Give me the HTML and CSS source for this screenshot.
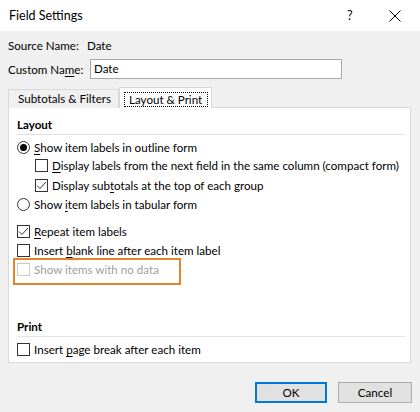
FILE: index.html
```html
<!DOCTYPE html>
<html>
<head>
<meta charset="utf-8">
<link rel="stylesheet" href="styles.css">
</head>
<body>
<div class="dialog">
  <div class="titlebar">
    <span class="title">Field Settings</span>
    <span class="help">?</span>
    <span class="close">
      <svg width="12" height="12" viewBox="0 0 12 12"><path d="M0.5 0.5 L11.5 11.5 M11.5 0.5 L0.5 11.5" stroke="#000" stroke-width="1" fill="none"/></svg>
    </span>
  </div>
  <div class="body">
    <div class="row source">
      <span class="label">Source Name:</span>
      <span class="value">Date</span>
    </div>
    <div class="row custom">
      <span class="label">Custom Na<u>m</u>e:</span>
      <div class="input">Date</div>
    </div>
    <div class="tabs">
      <div class="tab">Subtotals &amp; Filters</div>
      <div class="tab active"><span class="focus">Layout &amp; Print</span></div>
    </div>
    <div class="panel">
      <div class="heading">Layout</div>
      <div class="sep"></div>
      <div class="opt r1"><span class="radio on"></span><span><u>S</u>how item labels in outline form</span></div>
      <div class="opt sub c1"><span class="cb"></span><span><u>D</u>isplay labels from the next field in the same column (compact form)</span></div>
      <div class="opt sub c2"><span class="cb"><svg width="13" height="13" viewBox="0 0 13 13"><polyline points="2,6.5 5,9.5 11,3" fill="none" stroke="#333" stroke-width="1"/></svg></span><span>Display sub<u>t</u>otals at the top of each group</span></div>
      <div class="opt r2"><span class="radio"></span><span>Show <u>i</u>tem labels in tabular form</span></div>
      <div class="opt c3"><span class="cb"><svg width="13" height="13" viewBox="0 0 13 13"><polyline points="2,6.5 5,9.5 11,3" fill="none" stroke="#333" stroke-width="1"/></svg></span><span><u>R</u>epeat item labels</span></div>
      <div class="opt c4"><span class="cb"></span><span>Insert <u>b</u>lank line after each item label</span></div>
      <div class="opt c5 disabled"><span class="cb"></span><span>Show items with no data</span></div>
      <div class="heading print">Print</div>
      <div class="sep"></div>
      <div class="opt c6"><span class="cb"></span><span>Insert <u>p</u>age break after each item</span></div>
    </div>
    <div class="buttons">
      <div class="btn ok">OK</div>
      <div class="btn">Cancel</div>
    </div>
  </div>
</div>
</body>
</html>
```
FILE: styles.css
```css
* { box-sizing: border-box; }
html, body { margin: 0; padding: 0; }
body {
  width: 420px;
  height: 412px;
  overflow: hidden;
  font-family: "Lato", "Noto Sans", sans-serif;
  font-size: 11.6px;
  color: #000;
  background: #f0f0f0;
  white-space: nowrap;
}
u { text-decoration: underline; text-underline-offset: 2px; text-decoration-thickness: 1px; }
.dialog { width: 420px; height: 412px; display: flex; flex-direction: column; }
.titlebar {
  height: 31px;
  background: #fff;
  display: flex;
  align-items: center;
  padding-left: 9px;
}
.title { flex: 1; font-size: 12.5px; }
.help { width: 12px; margin-right: 30px; font-size: 12.5px; }
.close { width: 12px; margin-right: 19px; display: flex; }
.body { flex: 1; padding: 4px 8px 0 8px; display: flex; flex-direction: column; }
.row { display: flex; align-items: center; height: 20px; }
.source .label { width: 79px; flex: none; }
.custom { margin-top: 4px; }
.custom .label { width: 82px; flex: none; }
.input {
  width: 252px;
  height: 20px;
  border: 1px solid #a9a9a9;
  background: #fff;
  padding: 0 0 0 3px;
  line-height: 18px;
}
.tabs { display: flex; align-items: flex-end; margin-top: 8px; height: 21px; position: relative; z-index: 1; }
.tab {
  height: 19px;
  padding: 0 0 0 9px;
  border: 1px solid #d9d9d9;
  border-bottom: none;
  background: #f0f0f0;
  line-height: 17px;
  width: 111px;
}
.tab.active {
  height: 21px;
  width: 93px;
  background: #fff;
  padding: 4px 0 0 4px;
}
.focus {
  display: block;
  width: 84px;
  height: 15px;
  border: 1px dotted #000;
  line-height: 13px;
  padding-left: 4px;
}
.panel {
  width: 403px;
  height: 256px;
  background: #fff;
  border: 1px solid #d9d9d9;
  margin-top: -1px;
  padding: 8px 0 0 8px;
}
.heading { font-weight: bold; line-height: 18px; height: 18px; }
.sep { width: 388px; height: 1px; background: #e3e3e3; }
.opt { display: flex; align-items: center; height: 19px; gap: 4px; position: relative; }
.opt.r1 { margin-top: 3px; }
.opt.sub { padding-left: 18px; }
.opt.c1 { margin-top: -1px; }
.opt.c2 { margin-top: 1px; }
.opt.c3 { margin-top: 8px; }
.heading.print { margin-top: 39px; }
.opt.c6 { margin-top: 3px; }
.radio {
  width: 13px; height: 13px;
  border: 1px solid #333;
  border-radius: 50%;
  background: #fff;
  display: flex; align-items: center; justify-content: center;
  flex: none;
}
.radio.on::after {
  content: "";
  width: 7px; height: 7px; border-radius: 50%; background: #000;
}
.cb {
  width: 13px; height: 13px;
  border: 1px solid #333;
  background: #fff;
  flex: none;
  position: relative;
}
.cb svg { position: absolute; left: -1px; top: -1px; }
.disabled { color: #a0a0a0; }
.disabled .cb { border-color: #cccccc; }
.c5::after {
  content: "";
  position: absolute;
  left: -4px; top: -2px;
  width: 164px; height: 23px;
  border: 2px solid #e9822b;
}
.buttons { display: flex; justify-content: flex-end; gap: 11px; margin-top: 19px; }
.btn {
  height: 21px;
  width: 74px;
  background: #e1e1e1;
  border: 1px solid #adadad;
  display: flex; align-items: center; justify-content: center;
}
.btn.ok { width: 72px; border: 2px solid #0078d7; }
```
